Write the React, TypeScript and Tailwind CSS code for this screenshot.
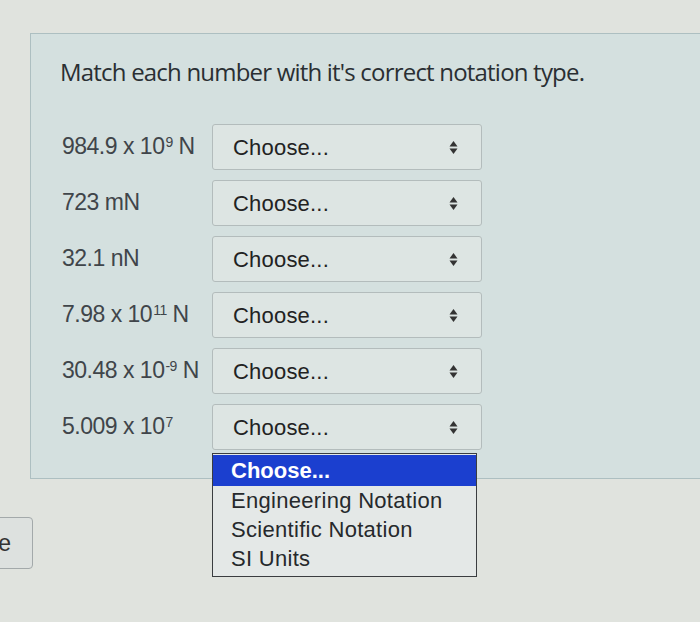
import React from "react";

type Row = { base: string; exp?: string; unit?: string };

const rows: Row[] = [
  { base: "984.9 x 10", exp: "9", unit: " N" },
  { base: "723 mN" },
  { base: "32.1 nN" },
  { base: "7.98 x 10", exp: "11", unit: " N" },
  { base: "30.48 x 10", exp: "-9", unit: " N" },
  { base: "5.009 x 10", exp: "7" },
];

const options = ["Engineering Notation", "Scientific Notation", "SI Units"];

function Arrows() {
  return (
    <svg width="9" height="15" viewBox="0 0 9 15" className="shrink-0">
      <path d="M4.5 1 L8.5 6.5 L0.5 6.5 Z" fill="#333" />
      <path d="M4.5 14 L8.5 8.5 L0.5 8.5 Z" fill="#333" />
    </svg>
  );
}

function FakeSelect() {
  return (
    <div className="w-[270px] h-[46px] rounded-[3px] border border-[#b3bcbc] bg-[#dde5e3] flex items-center justify-between pl-[20px] pr-[23px] text-[22px] text-[#222] tracking-[0.2px]">
      <span>Choose...</span>
      <Arrows />
    </div>
  );
}

export default function App() {
  return (
    <div
      className="relative w-[700px] h-[622px] overflow-hidden bg-[#e0e3de]"
      style={{ fontFamily: '"Liberation Sans", Arial, sans-serif' }}
    >
      <div className="pt-[33px] pl-[30px]">
        <div className="h-[446px] border border-r-0 border-[#adbfc1] bg-[#d4e0df] pl-[29px] pt-[20px]">
          <h1
            className="text-[24px] text-[#2a2f33] tracking-[-0.8px] leading-[36px]"
            style={{ fontFamily: '"Open Sans", sans-serif' }}
          >
            Match each number with it's correct notation type.
          </h1>
          <div className="mt-[34px] flex flex-col gap-[10px]">
            {rows.map((r, i) => (
              <div key={i} className="flex items-start">
                <div className="w-[152px] pl-[2px] pt-[10px] text-[23px] leading-[24px] text-[#40454a] tracking-[-0.5px] whitespace-nowrap">
                  {r.base}
                  {r.exp && <sup className="text-[14px] ml-[1px]">{r.exp}</sup>}
                  {r.unit}
                </div>
                <FakeSelect />
              </div>
            ))}
          </div>
        </div>
      </div>

      {/* partially visible button */}
      <div className="mt-[38px] -ml-[60px] w-[93px] h-[52px] rounded-[4px] border border-[#a3a9aa] bg-[#dde1df] flex items-center justify-end pr-[21px] text-[23px] text-[#333]">
        e
      </div>

      {/* open dropdown list */}
      <div className="absolute left-[212px] top-[453px] w-[265px] h-[124px] border border-[#3a3d40] bg-[#e4e8e7] text-[22px] leading-[29px] pt-[1px]">
        <div className="bg-[#1b3fcf] text-white font-bold pl-[18px] h-[31px] leading-[31px]">Choose...</div>
        {options.map((o) => (
          <div key={o} className="pl-[18px] text-[#26292c] h-[29px] tracking-[0.3px]">
            {o}
          </div>
        ))}
      </div>
    </div>
  );
}
